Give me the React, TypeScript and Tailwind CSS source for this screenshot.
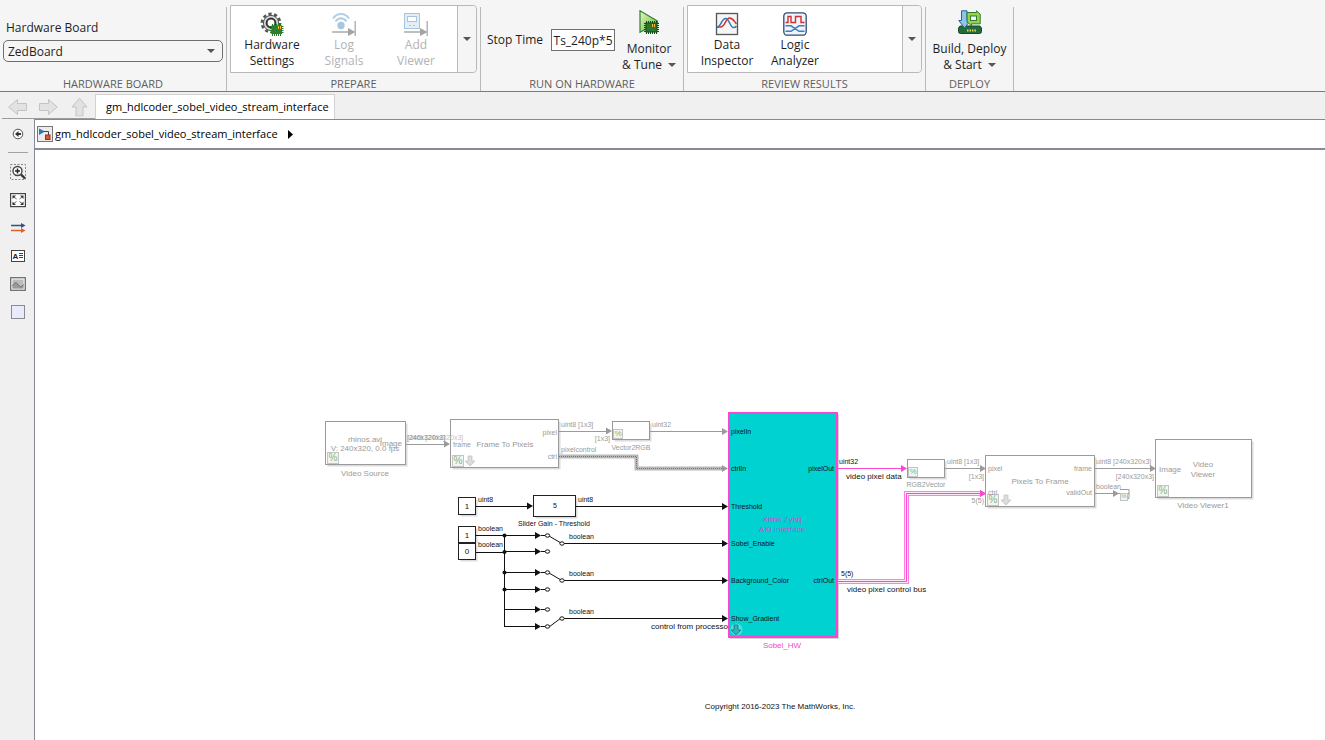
import type { ReactNode } from 'react';

const GRAY = '#9a9a9a';
const PINK = '#fb45d3';

function Caret() {
  return (
    <svg width="8" height="4" viewBox="0 0 8 4" className="shrink-0" aria-hidden="true">
      <path d="M0 0h8L4 4z" fill="#555" />
    </svg>
  );
}

/* ---------- toolstrip icons ---------- */

function HardwareSettingsIcon() {
  return (
    <svg width="24" height="24" viewBox="0 0 24 24" aria-hidden="true">
      <circle cx="11" cy="11" r="9" fill="none" stroke="#555" strokeWidth="2.8" strokeDasharray="3.2 2.45" />
      <circle cx="11" cy="11" r="7.6" fill="#d8d8d8" stroke="#555" strokeWidth="1" />
      <circle cx="11" cy="11" r="4.4" fill="#fff" stroke="#333" strokeWidth="2" />
      <path d="M12.500 12v12M14.500 12v12M16.500 12v12M18.500 12v12M20.500 12v12M10 14.500h13.500M10 16.500h13.500M10 18.500h13.500M10 20.500h13.500" stroke="#2c7a2c" strokeWidth="1" />
      <rect x="11.500" y="13.500" width="10.500" height="8.500" fill="#2e7d32" />
      <path d="M18.500 14v3M20.500 14v3" stroke="#e5c33c" strokeWidth="1" />
    </svg>
  );
}

function LogSignalsIcon() {
  return (
    <svg width="24" height="24" viewBox="0 0 24 24" aria-hidden="true">
      <path d="M1 6.500C5 .5 13 .5 17 6.500M3.500 9.500c3-4.200 8-4.200 11 0" fill="none" stroke="#b0cfe6" strokeWidth="2" />
      <circle cx="9" cy="13.500" r="3.700" fill="#a5c8e4" />
      <path d="M0 20h18M23.200 9v15" stroke="#aaa" strokeWidth="1.300" />
      <path d="M16 16l7.500 4-7.500 4z" fill="#a3a3a3" />
    </svg>
  );
}

function AddViewerIcon() {
  return (
    <svg width="24" height="24" viewBox="0 0 24 24" aria-hidden="true">
      <rect x=".5" y="1.500" width="15" height="15" fill="#e3eef8" stroke="#a7c4de" />
      <rect x="3.500" y="4.500" width="9" height="5" fill="#fff" stroke="#a7c4de" />
      <path d="M5 13.500h2M9 13.500h2" stroke="#a7c4de" />
      <path d="M0 20h18M23.200 9v15" stroke="#aaa" strokeWidth="1.300" />
      <path d="M16 16l7.500 4-7.500 4z" fill="#a3a3a3" />
    </svg>
  );
}

function MonitorTuneIcon() {
  return (
    <svg width="24" height="24" viewBox="0 0 24 24" aria-hidden="true">
      <defs>
        <linearGradient id="play" x1="0" y1="0" x2="1" y2="1">
          <stop offset="0" stopColor="#e6f7c8" />
          <stop offset="1" stopColor="#5fb52f" />
        </linearGradient>
      </defs>
      <path d="M3 .8v21.500L20.500 13v-2z" fill="url(#play)" stroke="#2e7d32" strokeWidth="1.200" />
      <path d="M9.500 11v13M11.500 11v13M13.500 11v13M15.500 11v13M17.500 11v13M19.500 11v13M7 13.500h15M7 15.500h15M7 17.500h15M7 19.500h15M7 21.500h15" stroke="#174a17" />
      <rect x="9" y="13" width="11" height="9" fill="#2d742d" stroke="#174a17" />
      <path d="M15.500 14v3M17.500 14v3" stroke="#e8b93a" />
    </svg>
  );
}

function DataInspectorIcon() {
  return (
    <svg width="24" height="24" viewBox="0 0 24 24" aria-hidden="true">
      <rect x="1.500" y="1.500" width="21" height="21" fill="#f5f5f5" stroke="#555" strokeWidth="1.300" />
      <path d="M2 15h3.500c4.500 0 5-9 9-9 3.500 0 4.500 3 7 6" fill="none" stroke="#d32f2f" strokeWidth="1.500" />
      <path d="M2 15.500C6 15 6.500 6.500 10.500 6.500S15 15.500 18.500 15.500q2 0 3-1.500" fill="none" stroke="#3179b5" strokeWidth="1.500" />
    </svg>
  );
}

function LogicAnalyzerIcon() {
  return (
    <svg width="24" height="24" viewBox="0 0 24 24" aria-hidden="true">
      <rect x=".8" y=".8" width="22.400" height="22.400" rx="3.500" fill="#f1f5fa" stroke="#2c4a7c" strokeWidth="1.300" />
      <path d="M2.500 10.500H5V4.500h3v6h4.500V4.500H18v6h3.500" fill="none" stroke="#d32f2f" strokeWidth="1.400" />
      <path d="M2.500 13.800h5.500l8 5.500h5.500M2.500 19.300h5.500l8-5.500h5.500" fill="none" stroke="#3a7fc1" strokeWidth="1.400" />
    </svg>
  );
}

function DeployIcon() {
  return (
    <svg width="24" height="24" viewBox="0 0 24 24" aria-hidden="true">
      <path d="M2 16h20l1.500 2v3.500q0 2-2 2h-19q-2 0-2-2V18z" fill="#256b3a" stroke="#174a27" />
      <path d="M9 20.500h10" stroke="#e9d25a" strokeWidth="2" strokeDasharray="1.500 1" />
      <path d="M3.500.8H9v9.700h3.500L6.500 18 .8 10.500h2.700z" fill="#8cc4ec" stroke="#24649b" />
      <path d="M9 2.500h9.500V.8l3.700 3.400v9.600h-8.700V16L10 12.500h-.8z" fill="#9bd04a" stroke="#2e7d32" />
      <rect x="12.500" y="6" width="6" height="4.500" fill="#f5f5f5" stroke="#2e7d32" />
    </svg>
  );
}

/* ---------- toolstrip ---------- */

function Section({ title, className, children }: { title: string; className: string; children: ReactNode }) {
  return (
    <section className={`flex shrink-0 flex-col ${className}`}>
      <div className="mt-[7px] flex grow flex-col border-r border-[#b9b9b9]">
        <div className="-mt-[7px] flex h-[77px]">{children}</div>
        <h2 className="text-center text-[11px] leading-[14px] text-[#5e5e5e]">{title}</h2>
      </div>
    </section>
  );
}

function Gallery({ children }: { children: ReactNode }) {
  return (
    <div className="mx-[3px] mt-[5px] flex h-[68px] grow rounded-r border border-[#b9b9b9] bg-white">
      <div className="flex grow pl-[5px]">{children}</div>
      <button aria-label="Show more" className="flex w-[19px] items-center justify-center rounded-r border-l border-[#b9b9b9] bg-[#f5f5f5]">
        <Caret />
      </button>
    </div>
  );
}

function ToolButton({ icon, lines, className, disabled, menu }: {
  icon: ReactNode;
  lines: string[];
  className: string;
  disabled?: boolean;
  menu?: boolean;
}) {
  return (
    <button disabled={disabled} className={`flex shrink-0 flex-col items-center text-[#1e1e1e] disabled:text-[#b3b3b3] ${className}`}>
      {icon}
      <span className={menu ? 'mt-[7px] leading-4' : 'mt-px leading-4'}>{lines[0]}</span>
      <span className="flex items-center gap-1.5 leading-4">
        {lines[1]}
        {menu && <Caret />}
      </span>
    </button>
  );
}

function Toolstrip() {
  return (
    <header className="flex h-[92px] border-b border-[#7b7b7b] bg-[#f5f5f5] text-[12px]">
      <Section title="HARDWARE BOARD" className="w-[227px]">
        <div className="grow px-[3px] pt-5">
          <label htmlFor="board" className="block pl-[3px] leading-4">Hardware Board</label>
          <div className="relative mt-1">
            <select id="board" className="h-[22px] w-full appearance-none rounded-[5px] border border-[#6f6f6f] bg-[#f5f5f5] px-1 pt-px leading-4">
              <option>ZedBoard</option>
            </select>
            <span className="pointer-events-none absolute top-[9px] right-2"><Caret /></span>
          </div>
        </div>
      </Section>
      <Section title="PREPARE" className="w-[254px]">
        <Gallery>
          <ToolButton icon={<HardwareSettingsIcon />} lines={['Hardware', 'Settings']} className="w-[72px] pt-[6px]" />
          <ToolButton icon={<LogSignalsIcon />} lines={['Log', 'Signals']} className="w-[72px] pt-[6px]" disabled />
          <ToolButton icon={<AddViewerIcon />} lines={['Add', 'Viewer']} className="w-[72px] pt-[6px]" disabled />
        </Gallery>
      </Section>
      <Section title="RUN ON HARDWARE" className="w-[203px]">
        <div className="flex grow items-center gap-2 pt-[3px] pl-[6px]">
          <label htmlFor="stop-time" className="whitespace-nowrap">Stop Time</label>
          <input id="stop-time" defaultValue="Ts_240p*5" className="h-[22px] w-16 border border-[#6f6f6f] bg-white text-center" />
        </div>
        <ToolButton icon={<MonitorTuneIcon />} lines={['Monitor', '& Tune']} className="mr-[2px] w-[68px] pt-[10px]" menu />
      </Section>
      <Section title="REVIEW RESULTS" className="w-[242px]">
        <Gallery>
          <ToolButton icon={<DataInspectorIcon />} lines={['Data', 'Inspector']} className="w-[68px] pt-[6px]" />
          <ToolButton icon={<LogicAnalyzerIcon />} lines={['Logic', 'Analyzer']} className="w-[68px] pt-[6px]" />
        </Gallery>
      </Section>
      <Section title="DEPLOY" className="w-[88px]">
        <ToolButton icon={<DeployIcon />} lines={['Build, Deploy', '& Start']} className="grow pt-[10px]" menu />
      </Section>
    </header>
  );
}

/* ---------- tab row and side palette ---------- */

function NavArrow({ label, className }: { label: string; className?: string }) {
  return (
    <button aria-label={label} className="flex">
      <svg width="19" height="18" viewBox="0 0 19 18" className={className} aria-hidden="true">
        <path d="M.7 9L9.500 1.500v4h9v7h-9v4z" fill="#e2e2e2" stroke="#c3c3c3" />
      </svg>
    </button>
  );
}

function PaletteButton({ label, children }: { label: string; children: ReactNode }) {
  return (
    <button aria-label={label} className="flex h-7 items-center justify-center">
      <svg width="16" height="16" viewBox="0 0 16 16" aria-hidden="true">{children}</svg>
    </button>
  );
}

function Palette() {
  return (
    <aside className="flex w-[34px] shrink-0 flex-col pt-px pl-[2px]">
      <PaletteButton label="Hide browser">
        <circle cx="8" cy="8" r="4.800" fill="#fafafa" stroke="#555" />
        <path d="M5 8l3.500-3v2H11v2H8.500v2z" fill="#333" />
      </PaletteButton>
      <hr className="mx-[6px] mt-1 mb-[5px] border-[#a3a3a3]" />
      <PaletteButton label="Zoom">
        <rect x=".5" y=".5" width="15" height="15" fill="none" stroke="#888" strokeDasharray="2 1.500" />
        <circle cx="7.500" cy="7" r="4.500" fill="#fff" stroke="#444" strokeWidth="1.400" />
        <path d="M5 7h5M7.500 4.500v5" stroke="#222" strokeWidth="1.500" />
        <path d="M11 10.500l4 4" stroke="#333" strokeWidth="2.400" />
      </PaletteButton>
      <PaletteButton label="Fit to view">
        <rect x=".6" y="1.600" width="14.800" height="13" fill="#fff" stroke="#444" strokeWidth="1.200" />
        <path d="M2.500 3.500H6L2.500 7zM13.500 3.500V7L10 3.500zM2.500 13V9.500L6 13zM13.500 13H10l3.500-3.500z" fill="#333" />
        <path d="M4 5l2.500 2M12 5L9.500 7M4 11.500L6.500 9.500M12 11.500L9.500 9.500" stroke="#333" strokeWidth=".8" />
      </PaletteButton>
      <PaletteButton label="Signals">
        <path d="M1 5.500h11" stroke="#35507c" strokeWidth="1.500" />
        <path d="M11 3l4.500 2.500L11 8z" fill="#35507c" />
        <path d="M1 10.500h11" stroke="#e0622b" strokeWidth="1.500" />
        <path d="M11 8l4.500 2.500L11 13z" fill="#e0622b" />
      </PaletteButton>
      <PaletteButton label="Annotation">
        <rect x="1.500" y="2.500" width="13" height="11" fill="#fff" stroke="#444" />
        <text x="2.500" y="11" fontSize="8" fontWeight="bold" fill="#222" fontFamily="Liberation Sans, sans-serif">A</text>
        <path d="M9 5.500h4M9 7.500h4M9 9.500h4" stroke="#444" />
      </PaletteButton>
      <PaletteButton label="Image">
        <rect x=".7" y="1.700" width="14.600" height="12.600" fill="#f5f5f5" stroke="#666" strokeWidth="1.200" />
        <rect x="2.500" y="3.500" width="11" height="9" fill="#bcbcbc" />
        <path d="M2.500 11c2-5 4-5 5.500-2s4 2 5.500-1v4.500h-11z" fill="#9a9a9a" />
        <path d="M2.500 10c2-4 4-4 5.500-1.500s3.500 3 5.500 0" fill="none" stroke="#666" />
      </PaletteButton>
      <PaletteButton label="Area">
        <rect x="1.500" y="1.500" width="13" height="13" fill="#e9ebfb" stroke="#8b8b93" />
      </PaletteButton>
    </aside>
  );
}

/* ---------- block diagram ---------- */

type LabelProps = { x: number; y: number; children: ReactNode; size?: number; color?: string; anchor?: 'start' | 'middle' | 'end' };

function Label({ x, y, children, size = 7, color = '#111', anchor = 'start' }: LabelProps) {
  return <text x={x} y={y} fontSize={size} fill={color} textAnchor={anchor}>{children}</text>;
}

function Block({ x, y, w, h, color = '#222' }: { x: number; y: number; w: number; h: number; color?: string }) {
  return (
    <g>
      <rect x={x + 2} y={y + 2} width={w} height={h} fill="#dcdcdc" />
      <rect x={x} y={y} width={w} height={h} fill="#fff" stroke={color} />
    </g>
  );
}

function Wire({ d, color = '#111' }: { d: string; color?: string }) {
  return <path d={d} fill="none" stroke={color} />;
}

function Head({ x, y, color = '#111' }: { x: number; y: number; color?: string }) {
  return <path d={`M${x - 6} ${y - 3.5}L${x} ${y}L${x - 6} ${y + 3.5}z`} fill={color} />;
}

function PercentBadge({ x, y, size = 12 }: { x: number; y: number; size?: number }) {
  return (
    <g transform={`translate(${x} ${y})`}>
      <rect x="0.500" y="0.500" width={size - 1} height={size - 1} fill="#f3f5f3" stroke="#c4c4c4" />
      <text x={size / 2} y={size - 3} fontSize={size - 2} textAnchor="middle" fill="#7fb87f">%</text>
    </g>
  );
}

function DownArrow({ x, y, fill, stroke }: { x: number; y: number; fill: string; stroke: string }) {
  return <path transform={`translate(${x} ${y})`} d="M-2 0h4v5h3l-5 5-5-5h3z" fill={fill} stroke={stroke} strokeWidth=".8" />;
}

/* manual switch: two inputs, the closed contact is joined to the output */
function Switch({ top, bottom, out, up, target }: { top: number; bottom: number; out: number; up: boolean; target: number }) {
  const from = up ? top : bottom;
  return (
    <g>
      <Wire d={`M505 ${top}.5H536M505 ${bottom}.5H536M541 ${top}.5h4M541 ${bottom}.5h4M564 ${out}.5H${target}`} />
      <Head x={541} y={top + 0.5} />
      <Head x={541} y={bottom + 0.5} />
      <Wire d={`M549 ${from + 1}L561 ${out}`} />
      <g fill="#fff" stroke="#111">
        <ellipse cx="547.5" cy={top + 0.5} rx="2.2" ry="1.7" />
        <ellipse cx="547.5" cy={bottom + 0.5} rx="2.2" ry="1.7" />
        <ellipse cx="562" cy={out + 0.5} rx="2.2" ry="1.7" />
      </g>
      <Label x={569} y={out - 4}>boolean</Label>
      <Head x={728} y={out + 0.5} />
    </g>
  );
}

function Diagram() {
  return (
    <svg width="1290" height="590" viewBox="35 150 1290 590" className="shrink-0" fontFamily="Liberation Sans, sans-serif" role="img" aria-label="Block diagram">
      {/* video source */}
      <Block x={325.5} y={421.5} w={80} h={43} color={GRAY} />
      <Label x={365} y={442} size={8} color={GRAY} anchor="middle">rhinos.avi</Label>
      <Label x={365} y={451} size={8} color={GRAY} anchor="middle">V: 240x320, 0.0 fps</Label>
      <Label x={402} y={446} size={8} color={GRAY} anchor="end">Image</Label>
      <PercentBadge x={327} y={452} />
      <Label x={365} y={476} size={8} color={GRAY} anchor="middle">Video Source</Label>
      <Wire d="M406 444.5H446" color={GRAY} />

      {/* frame to pixels */}
      <Block x={450.5} y={419.5} w={108} h={48} color={GRAY} />
      <Head x={450} y={444} color={GRAY} />
      <Label x={408} y={440} color="#c4c4c4">uint8 [240x320x3]</Label>
      <Label x={407} y={440} color="#888">[240x320x3]</Label>
      <Label x={453} y={447} color={GRAY}>frame</Label>
      <Label x={505} y={447} size={8} color={GRAY} anchor="middle">Frame To Pixels</Label>
      <Label x={557} y={435} color={GRAY} anchor="end">pixel</Label>
      <Label x={557} y={459} color={GRAY} anchor="end">ctrl</Label>
      <PercentBadge x={452} y={455} />
      <DownArrow x={470} y={456} fill="#dcdcdc" stroke="#c4c4c4" />
      <Wire d="M559 431.5H607" color={GRAY} />
      <Head x={612} y={431} color={GRAY} />
      <Label x={561} y={427} color={GRAY}>uint8 [1x3]</Label>
      <Label x={561} y={452} color={GRAY}>pixelcontrol</Label>
      <Label x={610} y={441} color={GRAY} anchor="end">[1x3]</Label>
      <path d="M559 456.500H636.500V468.500H722" fill="none" stroke="#b8b8b8" strokeWidth="4" />
      <path d="M559 456.500H636.500V468.500H722" fill="none" stroke="#777" strokeDasharray="1 1" />
      <Head x={728} y={468.5} color={GRAY} />

      {/* vector to rgb */}
      <Block x={612.5} y={421.5} w={37} h={18} color={GRAY} />
      <PercentBadge x={613} y={429} size={10} />
      <Label x={631} y={450} color={GRAY} anchor="middle">Vector2RGB</Label>
      <Label x={652} y={427} color={GRAY}>uint32</Label>
      <Wire d="M650 431.5H723" color={GRAY} />
      <Head x={728} y={431.5} color={GRAY} />

      {/* threshold */}
      <Block x={458.5} y={497.5} w={17} h={17} />
      <Label x={467} y={509} size={8} anchor="middle">1</Label>
      <Label x={478} y={502}>uint8</Label>
      <Wire d="M476 506.5H530" />
      <Head x={533} y={506} />
      <Block x={533.5} y={495.5} w={42} h={21} />
      <Label x={555} y={508} anchor="middle">5</Label>
      <Label x={554} y={526} anchor="middle">Slider Gain - Threshold</Label>
      <Label x={578} y={502}>uint8</Label>
      <Wire d="M576 506.5H724" />
      <Head x={728} y={506.5} />

      {/* boolean constants */}
      <Block x={458.5} y={526.5} w={17} h={16} />
      <Block x={458.5} y={543.5} w={17} h={16} />
      <Label x={467} y={538} size={8} anchor="middle">1</Label>
      <Label x={467} y={554} size={8} anchor="middle">0</Label>
      <Label x={478} y={531}>boolean</Label>
      <Label x={478} y={547}>boolean</Label>
      <Wire d="M476 535.5H505M476 552.5H505M504.5 535V627" />
      <g fill="#111">
        <circle cx="504.5" cy="535.5" r="2" />
        <circle cx="504.5" cy="552" r="2" />
        <circle cx="504.5" cy="572.5" r="2" />
        <circle cx="504.5" cy="589.5" r="2" />
      </g>
      <Switch top={535} bottom={551} out={543} up target={724} />
      <Switch top={572} bottom={589} out={580} up target={724} />
      <Switch top={609} bottom={626} out={618} up={false} target={724} />
      <Label x={651} y={629} size={8}>control from processor</Label>

      {/* hardware subsystem */}
      <rect x="730" y="414" width="109" height="225" fill="#d4d4d4" />
      <rect x="729" y="413" width="108" height="224" fill="#00d2d2" stroke={PINK} strokeWidth="2" />
      <Label x={731} y={434}>pixelIn</Label>
      <Label x={731} y={471}>ctrlIn</Label>
      <Label x={731} y={509}>Threshold</Label>
      <Label x={731} y={546}>Sobel_Enable</Label>
      <Label x={731} y={583}>Background_Color</Label>
      <Label x={731} y={621}>Show_Gradient</Label>
      <Label x={834} y={471} anchor="end">pixelOut</Label>
      <Label x={834} y={583} anchor="end">ctrlOut</Label>
      <Label x={782} y={522} size={8} color="#c94fd0" anchor="middle">Xilinx Zynq</Label>
      <Label x={782} y={532} size={8} color="#c94fd0" anchor="middle">AXI Interface</Label>
      <circle cx="736.500" cy="629.500" r="6" fill="#4fdede" />
      <DownArrow x={736} y={625} fill="#2bb5b8" stroke="#0d8288" />
      <Label x={782} y={648} size={8} color={PINK} anchor="middle">Sobel_HW</Label>

      {/* pixel and control outputs */}
      <Wire d="M838 468.5H901" color={PINK} />
      <Head x={907} y={468.5} color={PINK} />
      <Label x={839} y={464}>uint32</Label>
      <Label x={846} y={479} size={8}>video pixel data</Label>
      <g fill="none">
        <path d="M838 581.500H906.500V493.500H980" stroke="#fd7fe0" strokeWidth="5" />
        <path d="M838 581.500H906.500V493.500H980" stroke="#ffe9fa" strokeWidth="3" />
        <path d="M838 581.500H906.500V493.500H980" stroke={PINK} />
      </g>
      <Head x={986} y={493.5} color={PINK} />
      <Label x={841} y={576}>5(5)</Label>
      <Label x={847} y={592} size={8}>video pixel control bus</Label>

      {/* rgb to vector */}
      <Block x={907.5} y={459.5} w={37} h={18} color={GRAY} />
      <PercentBadge x={908} y={467} size={10} />
      <Label x={926} y={487} color={GRAY} anchor="middle">RGB2Vector</Label>
      <Wire d="M945 468.5H980" color={GRAY} />
      <Label x={947} y={464} color={GRAY}>uint8 [1x3]</Label>
      <Label x={984} y={479} color={GRAY} anchor="end">[1x3]</Label>
      <Label x={984} y={503} color={GRAY} anchor="end">5(5)</Label>

      {/* pixels to frame */}
      <Block x={985.5} y={455.5} w={109} h={51} color={GRAY} />
      <Head x={986} y={468.5} color={GRAY} />
      <Head x={986} y={493.5} color={PINK} />
      <PercentBadge x={987} y={494} />
      <Label x={988} y={471} color={GRAY}>pixel</Label>
      <Label x={988} y={495} color={GRAY}>ctrl</Label>
      <Label x={1040} y={484} size={8} color={GRAY} anchor="middle">Pixels To Frame</Label>
      <Label x={1092} y={471} color={GRAY} anchor="end">frame</Label>
      <Label x={1092} y={495} color={GRAY} anchor="end">validOut</Label>
      <DownArrow x={1006} y={495} fill="#dcdcdc" stroke="#c4c4c4" />
      <Wire d="M1095 468.5H1150M1095 493.5H1113" color={GRAY} />
      <Head x={1119} y={493.5} color={GRAY} />
      <Label x={1096} y={464} color={GRAY}>uint8 [240x320x3]</Label>
      <Label x={1154} y={479} color={GRAY} anchor="end">[240x320x3]</Label>
      <Label x={1096} y={489} color={GRAY}>boolean</Label>
      <Wire d="M1120 489.5h9v9h-9M1117 493.5h12" color={GRAY} />
      <PercentBadge x={1120} y={493} size={8} />

      {/* video viewer */}
      <Block x={1155.5} y={439.5} w={96} h={58} color={GRAY} />
      <Head x={1156} y={468.5} color={GRAY} />
      <Label x={1159} y={472} size={8} color={GRAY}>Image</Label>
      <Label x={1203} y={467} size={8} color={GRAY} anchor="middle">Video</Label>
      <Label x={1203} y={477} size={8} color={GRAY} anchor="middle">Viewer</Label>
      <PercentBadge x={1157} y={485} />
      <Label x={1203} y={508} size={8} color={GRAY} anchor="middle">Video Viewer1</Label>

      <Label x={780} y={709} size={8} anchor="middle">Copyright 2016-2023 The MathWorks, Inc.</Label>
    </svg>
  );
}

export default function App() {
  return (
    <div className="flex min-h-screen flex-col bg-[#f0f0f0] font-['Open_Sans','Noto_Sans',sans-serif] text-[12px] text-[#1e1e1e]">
      <Toolstrip />
      <nav className="flex h-[27px] items-end" aria-label="Model tabs">
        <div className="ml-[2px] flex h-full w-[93px] items-center gap-3 border-b border-[#9c9c9c] pt-[3px] pl-[6px]">
          <NavArrow label="Back" />
          <NavArrow label="Forward" className="rotate-180" />
          <NavArrow label="Up" className="rotate-90" />
        </div>
        <button className="h-[25px] border border-b-0 border-[#d2d2d2] bg-white pr-[5px] pl-[10px] text-[11px] text-black">
          gm_hdlcoder_sobel_video_stream_interface
        </button>
      </nav>
      <div className="flex grow">
        <Palette />
        <main className="flex min-w-0 grow flex-col overflow-hidden border-t border-l border-[#858a96] bg-white">
          <div className="flex h-[30px] shrink-0 items-center border-b-2 border-[#858a96] pl-[2px] text-[11px] text-black">
            <svg width="16" height="16" viewBox="0 0 16 16" aria-hidden="true">
              <rect x=".5" y=".5" width="15" height="15" fill="#ececec" stroke="#777" />
              <path d="M2 2.500l6 3-6 3.500z" fill="#2b78b8" />
              <path d="M7 5.500h4.500V9" fill="none" stroke="#444" />
              <rect x="8.500" y="9" width="4.500" height="4.500" fill="#e0582f" stroke="#9c2f14" />
            </svg>
            <span className="mr-[10px] ml-[2px]">gm_hdlcoder_sobel_video_stream_interface</span>
            <svg width="5" height="9" viewBox="0 0 5 9" aria-hidden="true">
              <path d="M0 0l5 4.500L0 9z" fill="#000" />
            </svg>
          </div>
          <Diagram />
        </main>
      </div>
    </div>
  );
}
